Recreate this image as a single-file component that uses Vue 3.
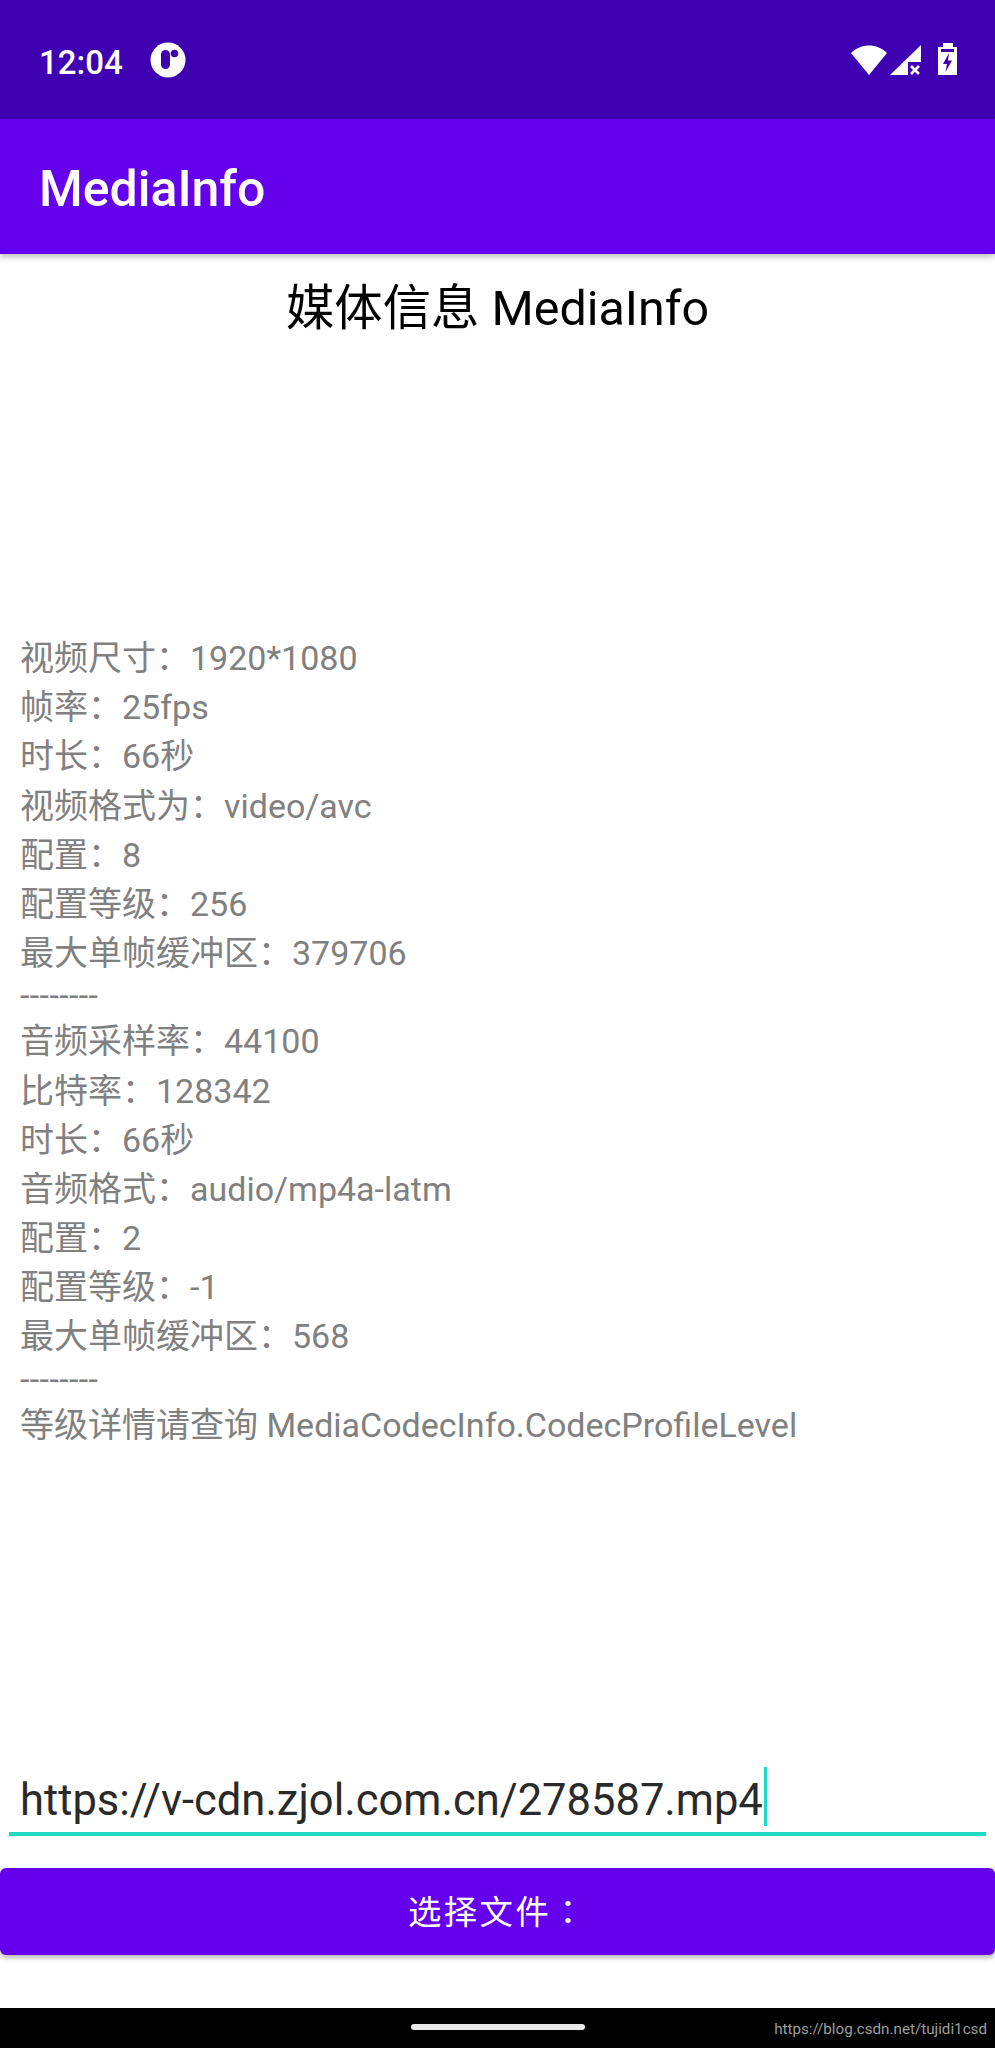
<script setup>
const lines = [
  { text: '视频尺寸：1920*1080' },
  { text: '帧率：25fps' },
  { text: '时长：66秒' },
  { text: '视频格式为：video/avc' },
  { text: '配置：8' },
  { text: '配置等级：256' },
  { text: '最大单帧缓冲区：379706' },
  { text: '--------', dash: true },
  { text: '音频采样率：44100' },
  { text: '比特率：128342' },
  { text: '时长：66秒' },
  { text: '音频格式：audio/mp4a-latm' },
  { text: '配置：2' },
  { text: '配置等级：-1' },
  { text: '最大单帧缓冲区：568' },
  { text: '--------', dash: true },
  { text: '等级详情请查询 MediaCodecInfo.CodecProfileLevel' },
]
</script>

<template>
  <div class="screen">
    <header class="status">
      <span class="time">12:04</span>
      <svg class="app-dot" viewBox="0 0 36 36" width="36" height="36">
        <circle cx="18" cy="18" r="17.5" fill="#fff" />
        <rect x="11" y="8" width="9" height="19" rx="4.5" fill="#3f00b2" />
        <circle cx="24.5" cy="11.5" r="3.8" fill="#3f00b2" />
      </svg>
      <svg class="sys" viewBox="0 0 110 36" width="110" height="36">
        <path d="M1 11 C 11 1, 27 1, 37 11 L19 33 Z" fill="#fff" />
        <path d="M71 3 V33 H40 Z" fill="#fff" />
        <rect x="58" y="20" width="14" height="14" fill="#3f00b2" />
        <path d="M61 24 L69 32 M69 24 L61 32" stroke="#fff" stroke-width="2.6" fill="none" />
        <path d="M93 1 H103 V5 H107 V33 H88 V5 H93 Z" fill="#fff" />
        <rect x="91" y="7" width="13" height="3" fill="#3f00b2" />
        <path d="M99 11 L93 22 H97 L95.5 30 L102 18.5 H98 Z" fill="#3f00b2" />
      </svg>
    </header>
    <div class="appbar">MediaInfo</div>
    <main class="content">
      <h1 class="title">媒体信息 MediaInfo</h1>
      <div class="info">
        <div v-for="(l, i) in lines" :key="i" :class="l.dash ? 'dash' : 'line'">{{ l.text }}</div>
      </div>
      <div class="field"><span class="value">https://v-cdn.zjol.com.cn/278587.mp4</span><span class="caret"></span></div>
      <button class="pick">选择文件<span class="colon">：</span></button>
    </main>
    <footer class="nav">
      <span class="pill"></span>
      <span class="mark">https://blog.csdn.net/tujidi1csd</span>
    </footer>
  </div>
</template>

<style>
body { margin: 0; background: #fff; }
</style>

<style scoped>
.screen {
  width: 995px;
  height: 2048px;
  display: flex;
  flex-direction: column;
  overflow: hidden;
  background: #fff;
  font-family: Roboto, "Noto Sans CJK SC", sans-serif;
}
.status {
  height: 119px;
  background: #3f00b2;
  display: flex;
  align-items: center;
  padding: 0 35px 0 39px;
  color: #fff;
  box-sizing: border-box;
  flex: none;
}
.time {
  font-size: 33px;
  font-weight: 500;
  line-height: 1;
  margin-top: 5px;
}
.app-dot { margin-left: 27px; margin-top: 1px; }
.sys { margin-left: auto; margin-top: 1px; }
.appbar {
  height: 135px;
  flex: none;
  background: #6500ec;
  color: #fff;
  font-size: 50px;
  font-weight: 500;
  line-height: 140px;
  padding-left: 39px;
  box-shadow: 0 3px 6px rgba(0, 0, 0, 0.25);
  position: relative;
}
.content {
  flex: 1;
  display: flex;
  flex-direction: column;
  min-height: 0;
}
.title {
  margin: 22px 0 0;
  font-size: 48.4px;
  font-weight: 400;
  line-height: 66px;
  text-align: center;
  color: #000;
}
.info {
  margin-top: 292px;
  padding-left: 20px;
  font-size: 34px;
  color: #808080;
}
.line { line-height: 49.2px; height: 49.2px; }
.dash { line-height: 35px; height: 39px; letter-spacing: 0.4px; }
.field {
  margin: auto 9px 0;
  height: 72px;
  border-bottom: 4px solid #1dd9c6;
  padding-left: 11px;
  display: flex;
  align-items: center;
  color: #2a2a2a;
  font-size: 43.5px;
}
.value { line-height: 60px; margin-top: 10px; }
.caret {
  width: 3.5px;
  height: 59px;
  background: #1dd9c6;
  margin-left: 1px;
}
.pick {
  margin: 32px 0 53px;
  height: 87px;
  border: 0;
  border-radius: 6px;
  background: #6500ec;
  color: #fff;
  font: inherit;
  font-size: 33.4px;
  letter-spacing: 2.4px;
  line-height: 84px;
  box-shadow: 0 3px 5px rgba(0, 0, 0, 0.28);
  padding: 0;
}
.colon { font-family: "Noto Sans CJK TC", sans-serif; }
.nav {
  height: 40px;
  flex: none;
  background: #000;
  position: relative;
  display: flex;
  justify-content: center;
  align-items: center;
}
.pill {
  width: 174px;
  height: 6px;
  border-radius: 3px;
  background: #e8e8e8;
  margin-bottom: 2px;
}
.mark {
  position: absolute;
  right: 8px;
  top: 12px;
  font-size: 15.2px;
  line-height: 18px;
  color: #9e9e9e;
}
</style>
